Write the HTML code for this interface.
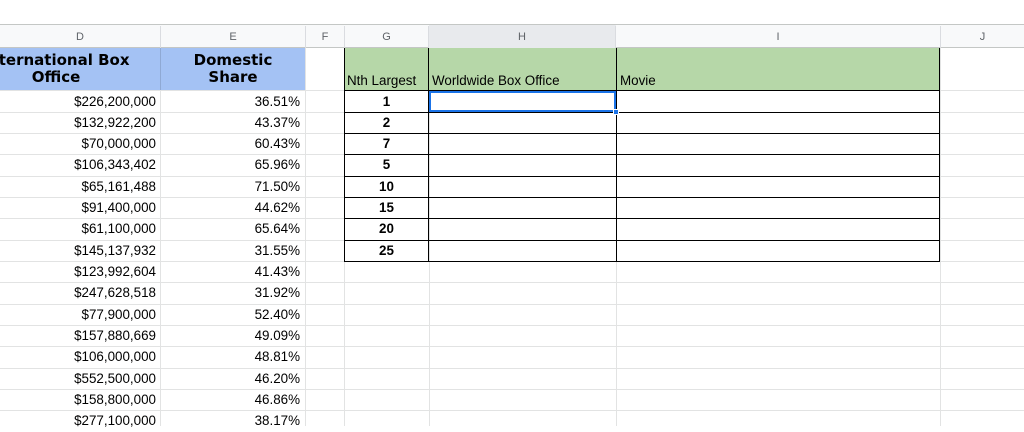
<!DOCTYPE html>
<html><head><meta charset="utf-8"><style>
*{margin:0;padding:0;box-sizing:border-box}
body{width:1024px;height:426px;overflow:hidden;background:#fff;font-family:"Liberation Sans",Arial,sans-serif;position:relative}
.a{position:absolute}
.hl{position:absolute;left:0;width:1024px;height:1px;background:#e2e3e3}
.vl{position:absolute;top:48px;height:378px;width:1px;background:#e2e3e3}
.ch{position:absolute;top:26px;height:23px;font-size:11px;color:#5f6368;text-align:center;line-height:23px;border-right:1px solid #dadce0}
.t{position:absolute;font-size:13.4px;color:#000;height:21px;line-height:22px;white-space:nowrap}
.d{right:868px;text-align:right}
.e{right:724px;text-align:right}
.g{left:344px;width:85px;text-align:center;font-weight:bold}
.bk{position:absolute;background:#000}
</style></head><body>
<div class="a" style="left:0;top:24px;width:1024px;height:1px;background:#c4c7c5"></div>
<div class="a" style="left:0;top:25px;width:1024px;height:23px;background:#f8f9fa;border-bottom:1px solid #c4c7c5"></div>
<div class="a" style="left:429px;top:25px;width:187px;height:23px;background:#e8eaed"></div>
<div class="ch" style="left:0;width:161px">D</div>
<div class="ch" style="left:161px;width:145px">E</div>
<div class="ch" style="left:306px;width:39px">F</div>
<div class="ch" style="left:345px;width:84px">G</div>
<div class="ch" style="left:429px;width:187px">H</div>
<div class="ch" style="left:616px;width:325px">I</div>
<div class="ch" style="left:941px;width:83px;border:none">J</div>

<div class="hl" style="top:90px"></div><div class="hl" style="top:112px"></div><div class="hl" style="top:133px"></div><div class="hl" style="top:154px"></div><div class="hl" style="top:176px"></div><div class="hl" style="top:197px"></div><div class="hl" style="top:218px"></div><div class="hl" style="top:240px"></div><div class="hl" style="top:261px"></div><div class="hl" style="top:282px"></div><div class="hl" style="top:304px"></div><div class="hl" style="top:325px"></div><div class="hl" style="top:346px"></div><div class="hl" style="top:368px"></div><div class="hl" style="top:389px"></div><div class="hl" style="top:410px"></div>
<div class="vl" style="left:160px"></div><div class="vl" style="left:305px"></div><div class="vl" style="left:344px"></div><div class="vl" style="left:429px"></div><div class="vl" style="left:616px"></div><div class="vl" style="left:940px"></div>

<div class="a" style="left:0;top:48px;width:305px;height:42px;background:#a4c2f4"></div>
<div class="a" style="left:160px;top:48px;width:1px;height:42px;background:#8fa9d4"></div>
<div class="a" style="left:-64px;top:52px;width:240px;text-align:center;font-family:'DejaVu Sans',sans-serif;font-weight:bold;font-size:15px;line-height:17px;color:#000">International Box<br>Office</div>
<div class="a" style="left:161px;top:52px;width:144px;text-align:center;font-family:'DejaVu Sans',sans-serif;font-weight:bold;font-size:15px;line-height:17px;color:#000">Domestic<br>Share</div>

<div class="a" style="left:344px;top:48px;width:596px;height:42px;background:#b6d7a8"></div>
<div class="t" style="left:347px;top:70px">Nth Largest</div>
<div class="t" style="left:432px;top:70px">Worldwide Box Office</div>
<div class="t" style="left:620px;top:70px">Movie</div>

<div class="bk" style="left:344px;top:48px;width:1px;height:214px"></div>
<div class="bk" style="left:428px;top:48px;width:1px;height:214px"></div>
<div class="bk" style="left:616px;top:48px;width:1px;height:214px"></div>
<div class="bk" style="left:939px;top:48px;width:1px;height:214px"></div>
<div class="bk" style="left:344px;top:90px;width:596px;height:1px"></div>
<div class="bk" style="left:344px;top:112px;width:596px;height:1px"></div>
<div class="bk" style="left:344px;top:133px;width:596px;height:1px"></div>
<div class="bk" style="left:344px;top:154px;width:596px;height:1px"></div>
<div class="bk" style="left:344px;top:176px;width:596px;height:1px"></div>
<div class="bk" style="left:344px;top:197px;width:596px;height:1px"></div>
<div class="bk" style="left:344px;top:218px;width:596px;height:1px"></div>
<div class="bk" style="left:344px;top:240px;width:596px;height:1px"></div>
<div class="bk" style="left:344px;top:261px;width:596px;height:1px"></div>

<div class="a" style="left:429px;top:91px;width:187px;height:21px;border:2px solid #1a73e8"></div>
<div class="a" style="left:613px;top:109px;width:6px;height:6px;background:#1a73e8;border:1px solid #fff"></div>

<div class="t g" style="top:91px">1</div>
<div class="t g" style="top:112px">2</div>
<div class="t g" style="top:133px">7</div>
<div class="t g" style="top:154px">5</div>
<div class="t g" style="top:176px">10</div>
<div class="t g" style="top:197px">15</div>
<div class="t g" style="top:218px">20</div>
<div class="t g" style="top:240px">25</div>

<div class="t d" style="top:91px">$226,200,000</div><div class="t e" style="top:91px">36.51%</div>
<div class="t d" style="top:112px">$132,922,200</div><div class="t e" style="top:112px">43.37%</div>
<div class="t d" style="top:133px">$70,000,000</div><div class="t e" style="top:133px">60.43%</div>
<div class="t d" style="top:154px">$106,343,402</div><div class="t e" style="top:154px">65.96%</div>
<div class="t d" style="top:176px">$65,161,488</div><div class="t e" style="top:176px">71.50%</div>
<div class="t d" style="top:197px">$91,400,000</div><div class="t e" style="top:197px">44.62%</div>
<div class="t d" style="top:218px">$61,100,000</div><div class="t e" style="top:218px">65.64%</div>
<div class="t d" style="top:240px">$145,137,932</div><div class="t e" style="top:240px">31.55%</div>
<div class="t d" style="top:261px">$123,992,604</div><div class="t e" style="top:261px">41.43%</div>
<div class="t d" style="top:282px">$247,628,518</div><div class="t e" style="top:282px">31.92%</div>
<div class="t d" style="top:304px">$77,900,000</div><div class="t e" style="top:304px">52.40%</div>
<div class="t d" style="top:325px">$157,880,669</div><div class="t e" style="top:325px">49.09%</div>
<div class="t d" style="top:346px">$106,000,000</div><div class="t e" style="top:346px">48.81%</div>
<div class="t d" style="top:368px">$552,500,000</div><div class="t e" style="top:368px">46.20%</div>
<div class="t d" style="top:389px">$158,800,000</div><div class="t e" style="top:389px">46.86%</div>
<div class="t d" style="top:410px">$277,100,000</div><div class="t e" style="top:410px">38.17%</div>
</body></html>
